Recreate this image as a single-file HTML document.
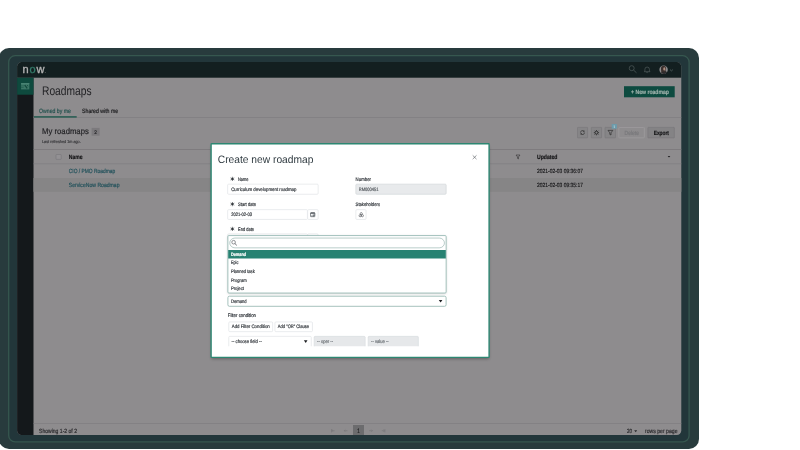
<!DOCTYPE html>
<html lang="en">
<head>
<meta charset="utf-8">
<title>Roadmaps - Create new roadmap</title>
<style>
html,body{margin:0;padding:0;background:#fff;}
body{width:800px;height:450px;overflow:hidden;}
svg{display:block;will-change:transform;}
text{font-family:"Liberation Sans",sans-serif;text-rendering:geometricPrecision;white-space:pre;}
</style>
</head>
<body>
<svg width="800" height="450" viewBox="0 0 800 450">
<defs><clipPath id="scr"><rect x="17.1" y="62.1" width="664.2" height="372.9" rx="4.5"/></clipPath><filter id="sh" x="-10%" y="-10%" width="120%" height="125%"><feGaussianBlur stdDeviation="1.6"/></filter></defs>
<rect x="-1" y="48" width="700" height="401" fill="#283b3d" rx="10"/>
<rect x="8.7" y="55.7" width="680.4" height="386.2" fill="#22363a" rx="6.5" stroke="#36574f" stroke-width="1.3"/>
<g clip-path="url(#scr)">
<rect x="17" y="62" width="666" height="374" fill="#8e8c8e"/>
<rect x="17" y="62" width="666" height="15.7" fill="#131f20"/>
<rect x="17" y="77.7" width="16.5" height="358" fill="#14181b"/>
<rect x="17" y="77.7" width="16.5" height="17" fill="#0e4a3e"/>
<g transform="translate(20.8 82.8)">
<rect x="0.3" y="0.3" width="8.2" height="6.3" fill="#3c7767"/>
<rect x="0.3" y="0.3" width="8.2" height="1.2" fill="#4b8676"/>
<path d="M0.3 3.1h3.2M0.3 4.7h2.6" fill="none" stroke="#1c5a4b" stroke-width="0.6"/>
<path d="M4 2.2l2.4 3.4" fill="none" stroke="#134a3d" stroke-width="1.3"/>
<path d="M6.2 2.4l1.2 1" fill="none" stroke="#134a3d" stroke-width="0.9"/>
</g>
<text x="22.4" y="72.7" font-size="11.4" letter-spacing="0.9" fill="#b4b4b4" stroke="#b4b4b4" stroke-width="0.35" textLength="22.9" lengthAdjust="spacingAndGlyphs">n<tspan fill="#357d6b" stroke="#357d6b">o</tspan>w</text>
<rect x="44.9" y="72" width="0.7" height="0.7" fill="#8a8a8a"/>
<circle cx="631.7" cy="68.2" r="2.5" fill="none" stroke="#566262" stroke-width="0.65"/>
<path d="M633.5 70.1L636.5 72.8" fill="none" stroke="#566262" stroke-width="0.7"/>
<path d="M644.9 71V69.3a2.25 2.25 0 0 1 4.5 0V71l.6.7H644.3z" fill="none" stroke="#566262" stroke-width="0.65"/>
<path d="M646.3 72.1a.9.9 0 0 0 1.7 0" fill="none" stroke="#566262" stroke-width="0.5"/>
<circle cx="663.6" cy="69.7" r="4.2" fill="#8a8a8c"/>
<path d="M661.6 66.6c1.5-1.4 4.3-.9 4.3 1.4c0 1.4-.5 2-.2 3.2l1.4 1.1a4.2 4.2 0 0 1-6 .5c.6-1.4-.9-4.2.5-6.2z" fill="#3b302d"/>
<ellipse cx="664.3" cy="68.9" rx="1.05" ry="1.6" fill="#b08e80"/>
<path d="M662.8 71.4l1.4 1.6l1.3-1.7l1.6 1a4.2 4.2 0 0 1-5.4.8z" fill="#2a2c30"/>
<path d="M670 69.6l1.45 1.3l1.45-1.3" fill="none" stroke="#6c7777" stroke-width="0.6"/>
<text x="42" y="95.00" font-size="12.5" fill="#222225" textLength="49.50" lengthAdjust="spacingAndGlyphs">Roadmaps</text>
<rect x="624" y="86.2" width="50.7" height="11.1" fill="#0d4b40"/>
<text x="631.1" y="94.02" font-size="6.2" font-weight="700" fill="#9fb3ad" textLength="37.90" lengthAdjust="spacingAndGlyphs" stroke="#9fb3ad" stroke-width="0.18">+ New roadmap</text>
<rect x="33.5" y="117" width="650" height="0.7" fill="#7f7d80"/>
<rect x="34" y="116.1" width="42.7" height="1.6" fill="#2b5f55"/>
<text x="39.1" y="113.20" font-size="6.2" fill="#24524f" textLength="31.80" lengthAdjust="spacingAndGlyphs" stroke="#24524f" stroke-width="0.18">Owned by me</text>
<text x="82.1" y="113.20" font-size="6.2" fill="#1a1a1c" textLength="36.00" lengthAdjust="spacingAndGlyphs" stroke="#1a1a1c" stroke-width="0.18">Shared with me</text>
<text x="42.1" y="134.20" font-size="8.4" fill="#222225" textLength="46.70" lengthAdjust="spacingAndGlyphs" stroke="#222225" stroke-width="0.18">My roadmaps</text>
<rect x="91.6" y="127.9" width="8" height="7.8" fill="#7c7a7d"/>
<text x="94.3" y="133.60" font-size="5.2" fill="#222225" textLength="2.60" lengthAdjust="spacingAndGlyphs" stroke="#222225" stroke-width="0.18">2</text>
<text x="42" y="142.80" font-size="4.2" fill="#3a3a3d" textLength="38.75" lengthAdjust="spacingAndGlyphs" stroke="#3a3a3d" stroke-width="0.18">Last refreshed 1m ago.</text>
<rect x="577.5" y="127.4" width="10.1" height="10.5" fill="#868587" rx="0.5" stroke="#777678" stroke-width="0.6"/>
<rect x="591.3" y="127.4" width="10.3" height="10.5" fill="#868587" rx="0.5" stroke="#777678" stroke-width="0.6"/>
<rect x="605" y="127.4" width="10.5" height="10.5" fill="#868587" rx="0.5" stroke="#777678" stroke-width="0.6"/>
<rect x="618.85" y="127.45" width="25.5" height="10.4" fill="#8e8c8e" rx="0.5" stroke="#a09ea1" stroke-width="0.7"/>
<rect x="647.9" y="127.4" width="26.5" height="10.5" fill="#848385" rx="0.5" stroke="#777678" stroke-width="0.6"/>
<rect x="611.7" y="124" width="5.2" height="4.8" fill="#6c9bab" rx="0.4"/>
<text x="613.6" y="127.70" font-size="3.6" fill="#c8d8de" textLength="1.50" lengthAdjust="spacingAndGlyphs" stroke="#c8d8de" stroke-width="0.18">1</text>
<text x="624.6" y="135.02" font-size="6.2" fill="#77777a" textLength="14.40" lengthAdjust="spacingAndGlyphs" stroke="#77777a" stroke-width="0.18">Delete</text>
<text x="653.7" y="135.02" font-size="6.2" font-weight="700" fill="#151517" textLength="15.30" lengthAdjust="spacingAndGlyphs" stroke="#151517" stroke-width="0.18">Export</text>
<g transform="translate(579.5 129.6)">
<path d="M5 3a2 2 0 0 1-3.6 1.2M1 3a2 2 0 0 1 3.6-1.2" fill="none" stroke="#222" stroke-width="0.6"/>
<path d="M4.7.9v1.2H3.5M1.3 5.1V3.9h1.2" fill="none" stroke="#222" stroke-width="0.5"/>
</g>
<g transform="translate(593.45 129.65)">
<circle cx="3" cy="3" r="1.45" fill="none" stroke="#222" stroke-width="0.8"/>
<path d="M4.70 3.00L5.60 3.00M4.20 4.20L4.84 4.84M3.00 4.70L3.00 5.60M1.80 4.20L1.16 4.84M1.30 3.00L0.40 3.00M1.80 1.80L1.16 1.16M3.00 1.30L3.00 0.40M4.20 1.80L4.84 1.16" fill="none" stroke="#222" stroke-width="0.8"/>
</g>
<g transform="translate(607.4 129.8)">
<path d="M0.6 0.6h4.8L3.6 3v2.2L2.4 4.6V3z" fill="none" stroke="#222" stroke-width="0.6"/>
</g>
<rect x="33.5" y="149.3" width="650" height="0.7" fill="#777578"/>
<rect x="33.5" y="163.5" width="650" height="0.7" fill="#7f7d80"/>
<rect x="33.5" y="178" width="650" height="13.8" fill="#868586"/>
<rect x="56" y="154.5" width="5.2" height="4.9" fill="#939194" rx="0.5" stroke="#77767a" stroke-width="0.6"/>
<text x="68.75" y="159.12" font-size="6.2" font-weight="700" fill="#151517" textLength="13.75" lengthAdjust="spacingAndGlyphs" stroke="#151517" stroke-width="0.18">Name</text>
<text x="537" y="159.12" font-size="6.2" font-weight="700" fill="#151517" textLength="20.50" lengthAdjust="spacingAndGlyphs" stroke="#151517" stroke-width="0.18">Updated</text>
<text x="68.75" y="173.45" font-size="6" fill="#1f505a" textLength="46.50" lengthAdjust="spacingAndGlyphs" stroke="#1f505a" stroke-width="0.18">CIO / PMO Roadmap</text>
<text x="68.75" y="187.25" font-size="6" fill="#1f505a" textLength="50.75" lengthAdjust="spacingAndGlyphs" stroke="#1f505a" stroke-width="0.18">ServiceNow Roadmap</text>
<text x="537" y="173.45" font-size="6" fill="#1c1c1e" textLength="46.00" lengthAdjust="spacingAndGlyphs" stroke="#1c1c1e" stroke-width="0.18">2021-02-03 09:36:07</text>
<text x="537" y="187.25" font-size="6" fill="#1c1c1e" textLength="46.00" lengthAdjust="spacingAndGlyphs" stroke="#1c1c1e" stroke-width="0.18">2021-02-03 09:35:17</text>
<g transform="translate(515.5 154.5)">
<path d="M0.5 0.5h4L3 2.4v2L2 3.9V2.4z" fill="none" stroke="#222" stroke-width="0.5"/>
</g>
<path d="M667.7 156h2.6L669 157.6z" fill="#1c1c1e"/>
<rect x="33.5" y="423.2" width="650" height="0.7" fill="#7f7d80"/>
<rect x="353" y="425" width="11" height="10" fill="#6c6c6e"/>
<text x="39" y="433.35" font-size="6" fill="#2a2a2d" textLength="38.00" lengthAdjust="spacingAndGlyphs" stroke="#2a2a2d" stroke-width="0.18">Showing 1-2 of 2</text>
<text x="357.3" y="432.69" font-size="6.4" fill="#1c1c1e" textLength="2.50" lengthAdjust="spacingAndGlyphs" stroke="#1c1c1e" stroke-width="0.18">1</text>
<text x="626.9" y="433.35" font-size="6" fill="#2a2a2d" textLength="5.00" lengthAdjust="spacingAndGlyphs" stroke="#2a2a2d" stroke-width="0.18">20</text>
<text x="645" y="433.35" font-size="6" fill="#2a2a2d" textLength="32.50" lengthAdjust="spacingAndGlyphs" stroke="#2a2a2d" stroke-width="0.18">rows per page</text>
<g transform="translate(328 427)" fill="none" stroke="#757477" stroke-width="0.6">
<path d="M3.5 2v3.4M6.6 3.7H4M5 2.6L3.9 3.7L5 4.8"/>
<path d="M19.4 3.7H16.2M17.3 2.6L16.2 3.7l1.1 1.1"/>
<path d="M41.2 3.7h3.2M43.3 2.6l1.1 1.1l-1.1 1.1"/>
<path d="M56.9 2v3.4M53.8 3.7h2.6M55.4 2.6l1.1 1.1l-1.1 1.1"/>
</g>
<path d="M634.2 430.2h3L635.7 432.2z" fill="#2a2a2d"/>
</g>
<rect x="211.5" y="146" width="277.5" height="213" fill="#000" opacity="0.3" filter="url(#sh)"/>
<rect x="211.1" y="143.7" width="278" height="213.7" fill="#fff" rx="0.6" stroke="#2d8772" stroke-width="1.4"/>
<path d="M472.7 155.35l3.8 3.8M476.5 155.35l-3.8 3.8" fill="none" stroke="#50555a" stroke-width="0.6"/>
<path d="M232.4 176.8v4.2M230.57 177.85l3.65 2.10M234.23 177.85l-3.65 2.10" fill="none" stroke="#2e3338" stroke-width="0.65"/>
<circle cx="232.4" cy="178.9" r="0.9" fill="#2e3338"/>
<path d="M232.4 202.0v4.2M230.57 203.05l3.65 2.10M234.23 203.05l-3.65 2.10" fill="none" stroke="#2e3338" stroke-width="0.65"/>
<circle cx="232.4" cy="204.1" r="0.9" fill="#2e3338"/>
<path d="M232.4 226.8v4.2M230.57 227.85l3.65 2.10M234.23 227.85l-3.65 2.10" fill="none" stroke="#2e3338" stroke-width="0.65"/>
<circle cx="232.4" cy="228.9" r="0.9" fill="#2e3338"/>
<text x="217.75" y="162.90" font-size="10.8" fill="#2f3a40" textLength="95.65" lengthAdjust="spacingAndGlyphs">Create new roadmap</text>
<text x="238" y="180.60" font-size="5" fill="#2e3338" textLength="10.50" lengthAdjust="spacingAndGlyphs" stroke="#2e3338" stroke-width="0.18">Name</text>
<text x="355.6" y="180.60" font-size="5" fill="#2e3338" textLength="15.40" lengthAdjust="spacingAndGlyphs" stroke="#2e3338" stroke-width="0.18">Number</text>
<text x="238" y="205.59" font-size="5" fill="#2e3338" textLength="18.00" lengthAdjust="spacingAndGlyphs" stroke="#2e3338" stroke-width="0.18">Start date</text>
<text x="355.6" y="205.59" font-size="5" fill="#2e3338" textLength="24.40" lengthAdjust="spacingAndGlyphs" stroke="#2e3338" stroke-width="0.18">Stakeholders</text>
<text x="238" y="230.80" font-size="5" fill="#2e3338" textLength="16.00" lengthAdjust="spacingAndGlyphs" stroke="#2e3338" stroke-width="0.18">End date</text>
<rect x="227.65" y="184.15" width="90.5" height="10.1" fill="#fff" rx="1" stroke="#e1e4e7" stroke-width="0.7"/>
<rect x="355.85" y="184.15" width="90.3" height="10.1" fill="#e8eaec" rx="1" stroke="#d3d7da" stroke-width="0.7"/>
<text x="231.25" y="191.35" font-size="4.9" fill="#2e3338" textLength="65.15" lengthAdjust="spacingAndGlyphs" stroke="#2e3338" stroke-width="0.18">Curriculum development roadmap</text>
<text x="358.75" y="191.35" font-size="4.9" fill="#555a5f" textLength="19.75" lengthAdjust="spacingAndGlyphs" stroke="#555a5f" stroke-width="0.18">RM000451</text>
<rect x="227.65" y="209.65" width="79.8" height="9.8" fill="#fff" rx="1" stroke="#e1e4e7" stroke-width="0.7"/>
<rect x="307.65" y="209.65" width="10.5" height="9.8" fill="#fff" rx="1" stroke="#e1e4e7" stroke-width="0.7"/>
<text x="231.25" y="216.20" font-size="4.9" fill="#2e3338" textLength="20.65" lengthAdjust="spacingAndGlyphs" stroke="#2e3338" stroke-width="0.18">2021-02-03</text>
<g transform="translate(310.1 212.3)">
<rect x="0.4" y="0.5" width="4.4" height="3.9" fill="#b4b8bc" rx="0.4" stroke="#4a4f54" stroke-width="0.55"/>
<rect x="0.4" y="0.3" width="4.4" height="0.9" fill="#4a4f54" rx="0.3"/>
<path d="M1.0 1.7h1.6v1.3H1.0z" fill="#fff"/>
<path d="M2.8 3.3l.6.5l1-1.3" fill="none" stroke="#2e3338" stroke-width="0.6"/>
</g>
<rect x="355.85" y="209.65" width="10.2" height="9.8" fill="#fff" rx="1" stroke="#e1e4e7" stroke-width="0.7"/>
<circle cx="361.25" cy="213.7" r="1.1" fill="none" stroke="#3a3f44" stroke-width="0.55"/>
<circle cx="360.15" cy="215.7" r="1.1" fill="none" stroke="#3a3f44" stroke-width="0.55"/>
<circle cx="362.35" cy="215.7" r="1.1" fill="none" stroke="#3a3f44" stroke-width="0.55"/>
<rect x="227.65" y="233.95" width="79.8" height="5.7" fill="#fff" rx="1" stroke="#e1e4e7" stroke-width="0.7"/>
<rect x="307.65" y="233.95" width="10.5" height="5.7" fill="#fff" rx="1" stroke="#e1e4e7" stroke-width="0.7"/>
<rect x="228" y="236.2" width="218" height="57.5" fill="#000" rx="1" opacity="0.18" filter="url(#sh)"/>
<rect x="227.875" y="235.575" width="218.25" height="57.45" fill="#fff" rx="1" stroke="#88b0a9" stroke-width="0.75"/>
<rect x="229.75" y="238.05" width="214.7" height="9.8" fill="#fff" rx="5.2" stroke="#9cb7b3" stroke-width="0.7"/>
<circle cx="233.6" cy="242.2" r="1.8" fill="none" stroke="#4a4f54" stroke-width="0.6"/>
<path d="M234.9 243.5L236.8 245.4" fill="none" stroke="#4a4f54" stroke-width="0.8"/>
<rect x="228.2" y="250" width="217.6" height="8.5" fill="#278272"/>
<text x="230.9" y="255.95" font-size="4.9" font-weight="700" fill="#ffffff" textLength="15.35" lengthAdjust="spacingAndGlyphs" stroke="#ffffff" stroke-width="0.18">Demand</text>
<text x="230.9" y="264.40" font-size="4.9" fill="#2e3338" textLength="7.50" lengthAdjust="spacingAndGlyphs" stroke="#2e3338" stroke-width="0.18">Epic</text>
<text x="230.9" y="273.15" font-size="4.9" fill="#2e3338" textLength="23.80" lengthAdjust="spacingAndGlyphs" stroke="#2e3338" stroke-width="0.18">Planned task</text>
<text x="230.9" y="281.85" font-size="4.9" fill="#2e3338" textLength="15.70" lengthAdjust="spacingAndGlyphs" stroke="#2e3338" stroke-width="0.18">Program</text>
<text x="230.9" y="290.40" font-size="4.9" fill="#2e3338" textLength="13.10" lengthAdjust="spacingAndGlyphs" stroke="#2e3338" stroke-width="0.18">Project</text>
<rect x="227.9" y="296.2" width="218.2" height="10.1" fill="#fff" rx="1.5" stroke="#8fb2ac" stroke-width="0.8"/>
<text x="230.9" y="302.85" font-size="4.9" fill="#2e3338" textLength="15.70" lengthAdjust="spacingAndGlyphs" stroke="#2e3338" stroke-width="0.18">Demand</text>
<path d="M438.8 299.9h3.6L440.6 302.6z" fill="#1d1f22"/>
<text x="227.8" y="317.19" font-size="5" fill="#2e3338" textLength="28.20" lengthAdjust="spacingAndGlyphs" stroke="#2e3338" stroke-width="0.18">Filter condition</text>
<rect x="228.75" y="321.95" width="43.9" height="9.7" fill="#fff" rx="1" stroke="#e1e4e7" stroke-width="0.7"/>
<rect x="274.95" y="321.95" width="37.5" height="9.7" fill="#fff" rx="1" stroke="#e1e4e7" stroke-width="0.7"/>
<text x="231.8" y="328.45" font-size="4.9" fill="#2e3338" textLength="37.90" lengthAdjust="spacingAndGlyphs" stroke="#2e3338" stroke-width="0.18">Add Filter Condition</text>
<text x="277.8" y="328.45" font-size="4.9" fill="#2e3338" textLength="31.30" lengthAdjust="spacingAndGlyphs" stroke="#2e3338" stroke-width="0.18">Add "OR" Clause</text>
<defs><clipPath id="cut"><rect x="220" y="330" width="220" height="16.2"/></clipPath></defs><g clip-path="url(#cut)">
<rect x="228.75" y="336.35" width="82.5" height="12.3" fill="#fff" rx="1" stroke="#e1e4e7" stroke-width="0.7"/>
<rect x="314.15" y="336.35" width="51" height="12.3" fill="#e6e8ea" rx="1" stroke="#d9dcdf" stroke-width="0.7"/>
<rect x="368.15" y="336.35" width="50.2" height="12.3" fill="#e6e8ea" rx="1" stroke="#d9dcdf" stroke-width="0.7"/>
</g>
<text x="231.6" y="343.05" font-size="4.9" fill="#2e3338" textLength="30.20" lengthAdjust="spacingAndGlyphs" stroke="#2e3338" stroke-width="0.18">-- choose field --</text>
<path d="M303.9 340.2h3.6L305.7 342.9z" fill="#1d1f22"/>
<text x="317" y="343.05" font-size="4.9" fill="#6a6f74" textLength="16.10" lengthAdjust="spacingAndGlyphs" stroke="#6a6f74" stroke-width="0.18">-- oper --</text>
<text x="371" y="343.05" font-size="4.9" fill="#6a6f74" textLength="17.75" lengthAdjust="spacingAndGlyphs" stroke="#6a6f74" stroke-width="0.18">-- value --</text>
</svg>
</body>
</html>
